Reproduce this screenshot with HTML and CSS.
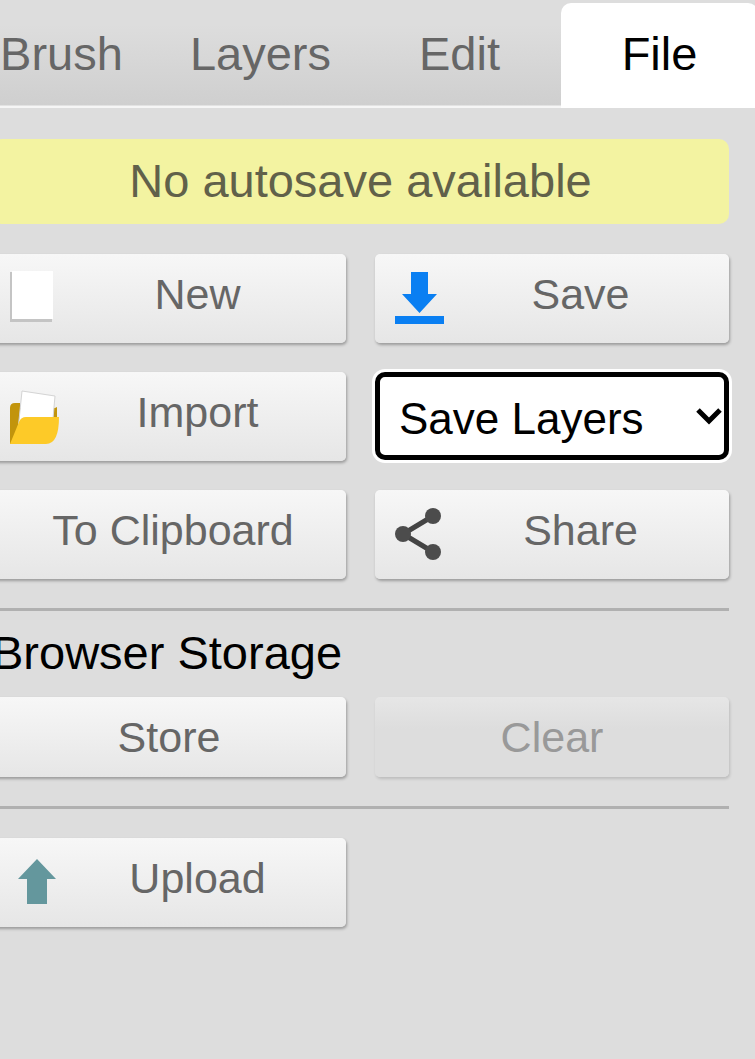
FILE: index.html
```
<!DOCTYPE html>
<html lang="en">
<head>
    <meta charset="UTF-8">
    <meta name="viewport" content="width=device-width, initial-scale=1.0">
    <title>File</title>
    <link rel="stylesheet" href="styles.css">
</head>
<body>
    <nav class="tabs">
        <button type="button" class="tab">Brush</button>
        <button type="button" class="tab">Layers</button>
        <button type="button" class="tab">Edit</button>
        <button type="button" class="tab active">File</button>
    </nav>

    <main class="panel">
        <div class="notice">No autosave available</div>

        <div class="grid">
            <button type="button" class="btn">
                <svg class="icon" viewBox="0 0 49 56">
                    <path d="M-2 1h42v50h-42z" fill="#c4c4c4"/>
                    <path d="M0 0h41v48H0z" fill="#fff"/>
                </svg>
                <span class="label">New</span>
            </button>
            <button type="button" class="btn">
                <svg class="icon" viewBox="0 0 49 56">
                    <path d="M16 1h17v22h9L24.500 42 7 23h9z" fill="#0a7ff2"/>
                    <path d="M0 45h49v8H0z" fill="#0a7ff2"/>
                </svg>
                <span class="label">Save</span>
            </button>
            <button type="button" class="btn">
                <svg class="icon" viewBox="0 0 49 56">
                    <path d="M-2 19q0-5 5-5h5v5h35l2-1v20L2 55h-4z" fill="#c2940c"/>
                    <path d="M10 2l33 5-3 34H6z" fill="#fff" stroke="#d4d4d4" stroke-width="1"/>
                    <path d="M14 28h33q0 27-13 27H-2l9-22q2-5 7-5z" fill="#fdca28"/>
                </svg>
                <span class="label">Import</span>
            </button>
            <div class="select">
                <select aria-label="Save Layers">
                    <option>Save Layers</option>
                </select>
                <svg class="arrow" viewBox="0 0 28 20">
                    <path d="M2 4l11 11L24 4" fill="none" stroke="#000" stroke-width="5"/>
                </svg>
            </div>
            <button type="button" class="btn"><span class="label">To Clipboard</span></button>
            <button type="button" class="btn">
                <svg class="icon" viewBox="0 0 49 56">
                    <path d="M38 9L8 27l30 18" fill="none" stroke="#444" stroke-width="5"/>
                    <g fill="#4c4c4c">
                        <circle cx="38" cy="9" r="8"/>
                        <circle cx="8" cy="27" r="8"/>
                        <circle cx="38" cy="45" r="8"/>
                    </g>
                </svg>
                <span class="label">Share</span>
            </button>
        </div>

        <hr>

        <h2>Browser Storage</h2>
        <div class="grid">
            <button type="button" class="btn small">Store</button>
            <button type="button" class="btn small" disabled>Clear</button>
        </div>

        <hr>

        <div class="grid">
            <button type="button" class="btn">
                <svg class="icon" viewBox="0 0 49 56">
                    <path d="M25 4L44 24h-9v25H15V24H6z" fill="#64979d"/>
                </svg>
                <span class="label">Upload</span>
            </button>
        </div>
    </main>
</body>
</html>
```
FILE: styles.css
```
* {
    box-sizing: border-box;
}
body {
    margin: 0;
    overflow: hidden;
    background: #ddd;
    color: #000;
    font-family: "Liberation Sans", Arial, sans-serif;
    font-size: 47px;
}
button, select {
    font-family: inherit;
    margin: 0;
    border: none;
    cursor: pointer;
}
/* the panel is scrolled a little past the left edge */
.tabs {
    display: grid;
    grid-template-columns: repeat(4, 1fr);
    margin: 0 -3px 0 -38px;
    height: 108px;
    padding-top: 3px;
    background: linear-gradient(#ddd 25px, #cfcfcf 105px, #f5f5f5 106px);
}
.tab {
    padding: 0 0 4px;
    background: none;
    color: #666;
    font-size: 47px;
}
.tab.active {
    margin-left: 2px;
    background: #fff;
    color: #000;
    border-radius: 10px 10px 0 0;
}
.panel {
    margin-left: -8px;
    padding: 31px 26px 30px 0;
}
.notice {
    height: 85px;
    margin-bottom: 30px;
    border-radius: 10px;
    background: #f3f3a1;
    color: #61614a;
    line-height: 84px;
    text-align: center;
}
.grid {
    display: grid;
    grid-template-columns: 1fr 1fr;
    gap: 29px;
}
.btn {
    display: flex;
    align-items: center;
    justify-content: center;
    height: 89px;
    padding: 0 12px 0 20px;
    border-radius: 5px;
    background: linear-gradient(#f7f7f7, #e6e6e6);
    box-shadow: 1px 2px 3px rgba(0, 0, 0, 0.3);
    color: #666;
    font-size: 43px;
}
.btn.small {
    height: 80px;
    padding: 0;
}
.btn:disabled {
    background: linear-gradient(#e6e6e6, #ddd 40%);
    box-shadow: 1px 2px 3px rgba(0, 0, 0, 0.15);
    color: #999;
}
.icon {
    flex: none;
    width: 49px;
    height: 56px;
    overflow: visible;
}
.label {
    flex: 1;
    padding-bottom: 8px;
}
.select {
    display: grid;
    align-items: center;
    height: 88px;
    border: 5px solid #000;
    border-radius: 10px;
    background: #fff;
    box-shadow: 0 0 0 3px #fff;
}
.select select, .arrow {
    grid-area: 1 / 1;
}
.select select {
    width: 100%;
    height: 100%;
    padding: 4px 0 0 19px;
    appearance: none;
    outline: none;
    background: none;
    color: #000;
    font-size: 44px;
}
.arrow {
    justify-self: end;
    width: 28px;
    height: 20px;
    pointer-events: none;
}
hr {
    height: 3px;
    margin: 29px 0;
    border: none;
    background: #b0b0b0;
}
h2 {
    margin: -15px 0 16px;
    font-size: 47px;
    font-weight: normal;
    line-height: 56px;
}
```
